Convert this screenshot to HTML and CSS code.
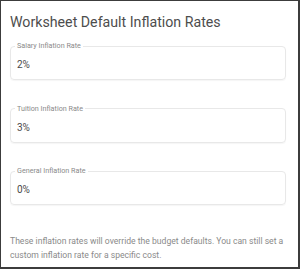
FILE: index.html
```html
<!DOCTYPE html>
<html>
<head>
<meta charset="utf-8">
<link rel="stylesheet" href="styles.css">
</head>
<body>
<div class="panel">
  <h1 class="title">Worksheet Default Inflation Rates</h1>
  <div class="fields">
    <fieldset class="field">
      <legend class="field-label">Salary Inflation Rate</legend>
      <div class="field-value">2%</div>
    </fieldset>
    <fieldset class="field">
      <legend class="field-label">Tuition Inflation Rate</legend>
      <div class="field-value">3%</div>
    </fieldset>
    <fieldset class="field">
      <legend class="field-label">General Inflation Rate</legend>
      <div class="field-value">0%</div>
    </fieldset>
  </div>
  <p class="note">These inflation rates will override the budget defaults. You can still set a custom inflation rate for a specific cost.</p>
</div>
</body>
</html>
```
FILE: styles.css
```css
html, body {
  margin: 0;
  padding: 0;
  background: #ffffff;
}
.panel {
  box-sizing: border-box;
  width: 300px;
  height: 269px;
  border: 1px solid #3c3c3c;
  border-right-width: 2px;
  border-bottom-width: 2px;
  padding: 11px 12px 0 9px;
  font-family: Roboto, "Liberation Sans", sans-serif;
  background: #fff;
}
.title {
  margin: 0;
  font-size: 14.2px;
  line-height: 20px;
  font-weight: 400;
  color: #4d4d4d;
}
.fields {
  display: flex;
  flex-direction: column;
  gap: 24.5px;
  margin-top: 10px;
}
.field {
  margin: 0;
  padding: 0 4px 6px 4px;
  border: 1px solid #e8e8e8;
  border-radius: 4px;
  box-shadow: 0 1px 1px rgba(0,0,0,0.04);
}
.field-label {
  padding: 0 2px;
  font-size: 7.2px;
  line-height: 8px;
  color: #8a8a8a;
}
.field-value {
  padding: 7px 0 0 2px;
  font-size: 10px;
  line-height: 16px;
  color: #4a4a4a;
}
.note {
  margin: 30px 0 0 0;
  font-size: 8.6px;
  line-height: 13.5px;
  color: #8a8a8a;
}
```
